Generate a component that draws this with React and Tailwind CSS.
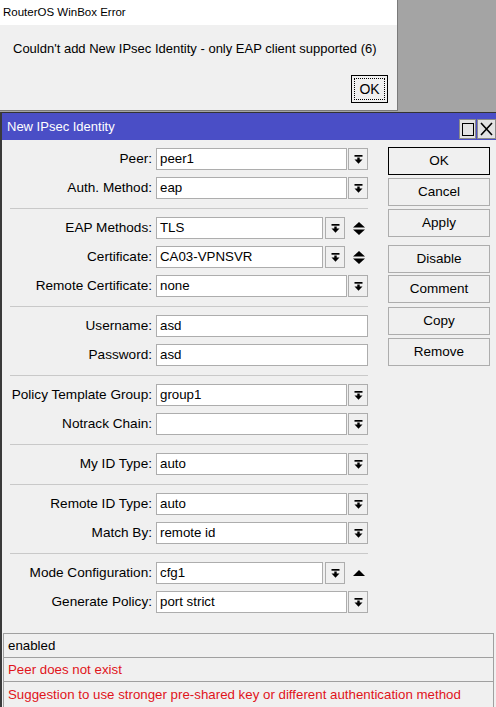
import React from 'react';

// WinBox style widgets
const DropIcon = () => (
  <svg width="9" height="9" viewBox="0 0 9 9">
    <rect x="0.5" y="0" width="8" height="1.7" fill="#000" />
    <rect x="3.3" y="2.5" width="2.4" height="2.5" fill="#000" />
    <polygon points="0.5,4.6 8.5,4.6 4.5,8.8" fill="#000" />
  </svg>
);

const DropButton = () => (
  <div className="w-[20px] h-[22px] border border-[#adadad] bg-[#f0f0f0] flex items-center justify-center">
    <DropIcon />
  </div>
);

const UpDown = ({ single }) => (
  <div className="w-[14px] flex items-center justify-center ml-[7px]">
    {single ? (
      <svg width="12" height="6" viewBox="0 0 12 6">
        <polygon points="0,6 12,6 6,0" fill="#000" />
      </svg>
    ) : (
      <svg width="12" height="13" viewBox="0 0 12 13">
        <polygon points="0,5.5 12,5.5 6,0" fill="#000" />
        <polygon points="0,7.5 12,7.5 6,13" fill="#000" />
      </svg>
    )}
  </div>
);

const Field = ({ value, width }) => (
  <div
    className="h-[22px] border border-[#adadad] bg-white pl-[3px] flex items-center text-[13.3px] text-black whitespace-nowrap overflow-hidden"
    style={{ width }}
  >
    {value}
  </div>
);

const Row = ({ label, value, kind = 'dd' }) => (
  <div className="flex items-center h-[22px] mb-[7px]">
    <div className="w-[150px] text-right text-[13.6px] text-black whitespace-nowrap">{label}</div>
    <div className="ml-[4px] flex items-center">
      {kind === 'plain' && <Field value={value} width={212} />}
      {kind === 'dd' && (
        <>
          <Field value={value} width={191} />
          <div className="ml-[1px]"><DropButton /></div>
        </>
      )}
      {(kind === 'ud' || kind === 'up') && (
        <>
          <Field value={value} width={167} />
          <div className="ml-[2px]"><DropButton /></div>
          <UpDown single={kind === 'up'} />
        </>
      )}
    </div>
  </div>
);

const Sep = () => <div className="h-px bg-[#c9c9c9] ml-[8px] mt-[2px] mb-[8px]" />;

const Btn = ({ children, mt, primary }) => (
  <div
    className={`w-[102px] h-[28px] flex items-center justify-center text-[13.5px] text-black bg-[#f0f0f0] border ${primary ? 'border-black' : 'border-[#adadad]'}`}
    style={{ marginTop: mt }}
  >
    {children}
  </div>
);

export default function App() {
  return (
    <div className="w-[496px] h-[707px] overflow-hidden bg-[#a4a4a4] flex flex-col font-['Liberation_Sans',Arial,sans-serif]">
      {/* error dialog */}
      <div className="w-[398px] h-[111px] flex flex-col border-r border-b border-[#7a7a7a] shrink-0">
        <div className="h-[25px] bg-white flex items-center pl-[3px] text-[11.5px] text-black">RouterOS WinBox Error</div>
        <div className="flex-1 bg-[#f0f0f0] flex flex-col">
          <div className="pt-[16px] pl-[13px] text-[13px] leading-[16px] text-black whitespace-nowrap">
            Couldn't add New IPsec Identity - only EAP client supported (6)
          </div>
          <div className="self-end mr-[9px] mt-[18px] w-[37px] h-[28px] border border-black p-[2px]">
            <div className="w-full h-full border border-dotted border-black flex items-center justify-center text-[14px] text-black">OK</div>
          </div>
        </div>
      </div>

      {/* IPsec identity window */}
      <div className="mt-[1px] flex-1 flex flex-col border-t border-[#333] border-l-2 border-l-[#3a3a3a]">
        <div className="h-[27px] bg-[#4a4ec6] flex items-center justify-between pl-[5px] shrink-0">
          <span className="text-white text-[13px]">New IPsec Identity</span>
          <div className="flex items-center gap-[1px] mt-[5px]">
            <div className="w-[17px] h-[20px] bg-[#e3e3e3] border border-[#8a8a8a] flex items-center justify-center">
              <div className="w-[12px] h-[13px] border-[1.5px] border-black" />
            </div>
            <div className="w-[19px] h-[20px] bg-[#e3e3e3] border border-[#8a8a8a] flex items-center justify-center">
              <svg width="13" height="14" viewBox="0 0 13 14">
                <path d="M1 1 L12 13 M12 1 L1 13" stroke="#000" strokeWidth="1.6" />
              </svg>
            </div>
          </div>
        </div>

        <div className="flex-1 bg-[#f0f0f0] flex flex-col">
          <div className="flex">
            <div className="w-[366px] pt-[8px] flex flex-col">
              <Row label="Peer:" value="peer1" />
              <Row label="Auth. Method:" value="eap" />
              <Sep />
              <Row label="EAP Methods:" value="TLS" kind="ud" />
              <Row label="Certificate:" value="CA03-VPNSVR" kind="ud" />
              <Row label="Remote Certificate:" value="none" />
              <Sep />
              <Row label="Username:" value="asd" kind="plain" />
              <Row label="Password:" value="asd" kind="plain" />
              <Sep />
              <Row label="Policy Template Group:" value="group1" />
              <Row label="Notrack Chain:" value="" />
              <Sep />
              <Row label="My ID Type:" value="auto" />
              <Sep />
              <Row label="Remote ID Type:" value="auto" />
              <Row label="Match By:" value="remote id" />
              <Sep />
              <Row label="Mode Configuration:" value="cfg1" kind="up" />
              <Row label="Generate Policy:" value="port strict" />
            </div>
            <div className="ml-[20px] flex flex-col">
              <Btn mt={7} primary>OK</Btn>
              <Btn mt={3}>Cancel</Btn>
              <Btn mt={3}>Apply</Btn>
              <Btn mt={8}>Disable</Btn>
              <Btn mt={2}>Comment</Btn>
              <Btn mt={4}>Copy</Btn>
              <Btn mt={3}>Remove</Btn>
            </div>
          </div>

          {/* status bar */}
          <div className="mt-[13px] ml-[1px] w-[491px] border-t border-l border-r border-[#a0a0a0] text-[13.3px]">
            <div className="h-[24px] border-b border-[#a0a0a0] flex items-center pl-[4px] text-black">enabled</div>
            <div className="h-[24px] border-b border-[#a0a0a0] flex items-center pl-[4px] text-[#e0141b]">Peer does not exist</div>
            <div className="h-[26px] flex items-center pl-[4px] text-[#e0141b]">Suggestion to use stronger pre-shared key or different authentication method</div>
          </div>
        </div>
      </div>
    </div>
  );
}
